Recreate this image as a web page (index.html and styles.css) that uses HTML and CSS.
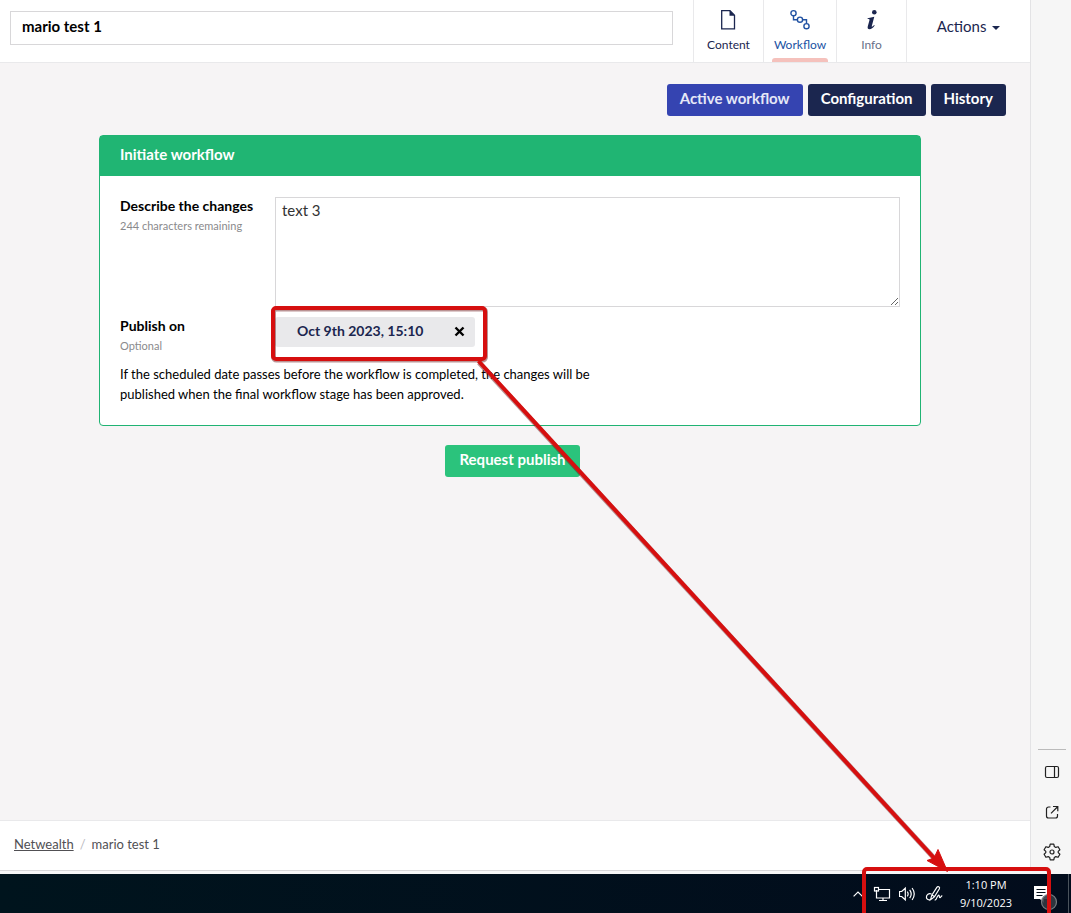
FILE: index.html
```
<!DOCTYPE html>
<html lang="en">
<head>
    <meta charset="UTF-8">
    <meta name="viewport" content="width=device-width, initial-scale=1.0">
    <title>mario test 1</title>
    <link rel="stylesheet" href="styles.css">
</head>
<body>
    <div class="browser">
        <div class="editor">
            <header class="editor-header">
                <div class="name-wrap">
                    <input class="name-input" type="text" value="mario test 1" aria-label="Name">
                </div>
                <nav class="tabs">
                    <button class="tab" type="button">
                        <svg width="20" height="22" viewBox="0 0 20 22"><path d="M2.700 1.700h8.300l4.500 4.500v13.600H2.700z" fill="none" stroke="#1b264f" stroke-width="1.300"/><path d="M10.500 1.200v5.500h5.500z" fill="#1b264f"/></svg>
                        <span>Content</span>
                    </button>
                    <button class="tab tab-active" type="button">
                        <svg width="20" height="22" viewBox="0 0 20 22" fill="none" stroke="#2152a3" stroke-width="1.4"><circle cx="3.5" cy="4.2" r="2.6"/><circle cx="10" cy="10.7" r="2.6"/><circle cx="16.5" cy="17.2" r="2.6"/><path d="M3.5 6.8v3.9h3.9M12.6 10.7h3.9v3.9"/></svg>
                        <span>Workflow</span>
                    </button>
                    <button class="tab tab-info" type="button">
                        <svg width="20" height="22" viewBox="0 0 20 22" fill="#1b264f"><circle cx="12.3" cy="3.3" r="2.3"/><path d="M5.7 9.2l6.6-1.5-2.5 9.2c-.3 1.3.5 1.1 2.3-.9l.6.5c-1.8 2.600-3.500 3.800-5.100 3.800-1.800 0-2.300-1.200-1.800-3l1.600-5.700c.4-1.500 0-1.700-1.900-1.700z"/></svg>
                        <span>Info</span>
                    </button>
                </nav>
                <button class="actions" type="button">Actions <span class="caret"></span></button>
            </header>

            <main class="content">
                <div class="toolbar">
                    <button class="btn btn-current" type="button">Active workflow</button>
                    <button class="btn" type="button">Configuration</button>
                    <button class="btn" type="button">History</button>
                </div>

                <form class="workflow">
                    <section class="box">
                        <h1 class="box-header">Initiate workflow</h1>
                        <div class="box-body">
                            <div class="row">
                                <div class="row-label">
                                    <label class="label" for="comment">Describe the changes</label>
                                    <small class="hint">244 characters remaining</small>
                                </div>
                                <textarea class="comment" id="comment">text 3</textarea>
                            </div>
                            <div class="row">
                                <div class="row-label">
                                    <label class="label" for="publish-on">Publish on</label>
                                    <small class="hint">Optional</small>
                                </div>
                                <div class="date">
                                    <button class="date-value" id="publish-on" type="button">Oct 9th 2023, 15:10</button>
                                    <button class="date-clear" type="button" aria-label="Clear date">
                                        <svg width="11" height="11" viewBox="0 0 11 11"><path d="M1.500 1.500l8 8M9.500 1.500l-8 8" stroke="#000" stroke-width="2.400"/></svg>
                                    </button>
                                </div>
                            </div>
                            <p class="note">If the scheduled date passes before the workflow is completed, the changes will be published when the final workflow stage has been approved.</p>
                        </div>
                    </section>
                    <div class="form-actions">
                        <button class="btn btn-publish" type="button">Request publish</button>
                    </div>
                </form>
            </main>

            <footer class="editor-footer">
                <a class="crumb" href="#">Netwealth</a>
                <span class="slash">/</span>
                <span>mario test 1</span>
            </footer>
        </div>

        <aside class="rail">
            <button class="rail-btn" type="button" aria-label="Split screen">
                <svg width="16" height="16" viewBox="0 0 16 16"><rect x="1.500" y="2.500" width="13" height="11" rx="1.500"/><path d="M10.500 2.500v11"/></svg>
            </button>
            <button class="rail-btn" type="button" aria-label="Open in new tab">
                <svg width="16" height="16" viewBox="0 0 16 16"><path d="M6.500 3H4.500a2 2 0 0 0-2 2v7a2 2 0 0 0 2 2h7a2 2 0 0 0 2-2v-2M9 2.500h4.800v4.800M13.800 2.500L7 9.300"/></svg>
            </button>
            <button class="rail-btn" type="button" aria-label="Settings">
                <svg width="18" height="18" viewBox="0 0 18 18"><path d="M7.200 1.200h3.600l.5 2.300 1.500.9 2.300-.7 1.800 3.100-1.700 1.600v1.200l1.700 1.600-1.800 3.100-2.300-.7-1.500.9-.5 2.300H7.200l-.5-2.300-1.500-.9-2.300.7-1.800-3.100 1.700-1.600V8.400L1.100 6.800l1.800-3.100 2.300.7 1.500-.9z" stroke-linejoin="round"/><circle cx="9" cy="9" r="2"/></svg>
            </button>
        </aside>
    </div>

    <div class="taskbar">
        <svg class="tray-up" width="12" height="6" viewBox="0 0 12 6"><path d="M.6 5.400L5 1l4.400 4.400"/></svg>
        <svg width="18" height="16" viewBox="0 0 18 16"><path d="M5.500 3.500h11v8.500h-13V6.500M10 12v2.500M6 14.500h8M3.500 4v3"/><rect x="1.500" y="1.500" width="4" height="3.500"/></svg>
        <svg width="18" height="16" viewBox="0 0 18 16"><path d="M.5 5.500h2.200l3.600-3.300v11.600l-3.600-3.300H.5zM8.300 5.600q1.700 2.400 0 4.800M10.700 3.800q3 4.200 0 8.400M13.100 2q4.300 6 0 12"/></svg>
        <svg width="18" height="18" viewBox="0 0 18 18"><path d="M6.500 9C3.800 7.900 1.400 9.500 1.400 12.200c0 2.300 2.500 3.200 4.600 2.300M5.500 14.800l1.300-4.600 5.200-8.100c.9-1.200 3.200 0 2.400 1.600l-5 8.200zM7 10l2.500 1.800M9.700 15.200c2.500.1 1.800-4.300 3.800-5 1.300-.3.300 2.600 1.600 2.400 1-.2.8-2 2.200-1.800"/></svg>
        <div class="clock">
            <span>1:10 PM</span>
            <span>9/10/2023</span>
        </div>
        <svg class="notify" width="26" height="27" viewBox="0 0 26 27"><path d="M0 0h14v13H10v4l-4-4H0z" fill="#fff" stroke="none"/><path d="M2.500 3.500h9M2.500 6.500h9M2.500 9.500h6" stroke="#020c18"/><circle cx="15" cy="16" r="7.500" fill="#333a42" fill-opacity=".9" stroke="#777c80"/></svg>
        <div class="show-desktop"></div>
    </div>

    <svg class="markup" width="1071" height="913" viewBox="0 0 1071 913">
        <g fill="none" stroke="#651012" stroke-opacity=".45" stroke-width="5">
            <rect x="273.500" y="309" width="212" height="51" rx="3"/>
            <path d="M479 362.500L934 858"/>
        </g>
        <g fill="none" stroke="#d60f0f" stroke-width="4">
            <rect x="273" y="308" width="212" height="51" rx="3"/>
            <rect x="864" y="869" width="185" height="60" rx="3"/>
            <path d="M478.500 361L935 859"/>
        </g>
        <path d="M947.500 871.500L927 860.500L934 858L938 849.500Z" fill="#d60f0f" stroke="#d60f0f"/>
    </svg>
</body>
</html>
```
FILE: styles.css
```
* {
    box-sizing: border-box;
}

body {
    display: flex;
    flex-direction: column;
    min-height: 100vh;
    margin: 0;
    background: #f6f6f6;
    font-family: Lato, "Open Sans", sans-serif;
    font-size: 15px;
    line-height: 20px;
    color: #000;
}

button, input, textarea {
    font: inherit;
    color: inherit;
    margin: 0;
}

button {
    border: none;
    background: none;
    padding: 0;
    cursor: pointer;
}

.browser {
    flex: 1;
    display: flex;
    padding-bottom: 3px;
}

/* editor */
.editor {
    flex: 1;
    display: flex;
    flex-direction: column;
    background: #f6f4f5;
    border-right: 1px solid #e3e3e5;
    border-bottom: 1px solid #d8d7d9;
}

.editor-header {
    display: flex;
    height: 63px;
    background: #fff;
    border-bottom: 1px solid #e9e9eb;
}

.name-wrap {
    flex: 1;
    padding: 11px 20px 0 10px;
}

.name-input {
    width: 100%;
    height: 34px;
    padding: 0 11px 4px;
    border: 1px solid #d8d7d9;
    font-weight: bold;
}

.tabs {
    display: flex;
}

.tab {
    display: flex;
    flex-direction: column;
    align-items: center;
    gap: 4px;
    width: 70px;
    padding-top: 9px;
    border-left: 1px solid #e9e9eb;
    font-size: 12px;
    color: #1b264f;
}

.tab-active {
    position: relative;
    width: 73px;
    color: #2152a3;
}

.tab-active::after {
    content: "";
    position: absolute;
    left: 8px;
    right: 8px;
    bottom: 0;
    height: 4px;
    background: #f5c1bc;
    border-radius: 3px 3px 0 0;
}

.tab-info {
    color: #68708a;
}

.actions {
    width: 124px;
    padding-bottom: 10px;
    border-left: 1px solid #e9e9eb;
    color: #1b264f;
}

.caret {
    display: inline-block;
    margin-left: 2px;
    vertical-align: 2px;
    border: 4px solid transparent;
    border-top-color: #1b264f;
    border-bottom: 0;
}

.content {
    flex: 1;
    padding: 21px 24px;
}

.toolbar {
    display: flex;
    justify-content: flex-end;
    gap: 5px;
}

.btn {
    height: 32px;
    padding: 0 13px 4px;
    border-radius: 3px;
    background: #1b264f;
    color: #fff;
    font-weight: bold;
}

.btn-current {
    background: #3544b1;
    color: #e6e8f7;
}

.workflow {
    padding: 19px 85px 0 75px;
}

.box {
    border: 1px solid #20b373;
    border-radius: 4px;
    background: #fff;
}

.box-header {
    margin: 0;
    padding: 8px 20px 12px;
    background: #20b573;
    color: #fff;
    font-size: 15px;
    line-height: 20px;
}

.box-body {
    padding: 21px 20px;
}

.row {
    display: flex;
}

.row + .row {
    margin-top: 9px;
}

.row-label {
    display: flex;
    flex-direction: column;
    width: 155px;
}

.row:first-child .row-label {
    margin-top: -1px;
}

.label {
    font-size: 14px;
    font-weight: bold;
}

.hint {
    font-size: 11px;
    color: #8a8a8c;
}

.comment {
    flex: 1;
    height: 110px;
    padding: 2px 6px;
    border: 1px solid #d8d7d9;
    color: #333;
}

.date {
    display: flex;
    height: 30px;
    margin-top: 1px;
    background: #e9e9eb;
    border-radius: 3px;
}

.date-value {
    padding: 0 22px 2px;
    color: #1b264f;
    font-size: 14px;
    font-weight: bold;
}

.date-clear {
    display: flex;
    align-items: center;
    padding: 0 10px 1px 9px;
}

.note {
    max-width: 480px;
    margin: 8px 0 0;
    font-size: 13px;
}

.form-actions {
    display: flex;
    justify-content: center;
    padding: 19px 0 0 5px;
}

.btn-publish {
    padding: 0 14px 4px;
    background: #2bc37c;
}

.editor-footer {
    display: flex;
    gap: 6px;
    padding: 13px 14px 16px;
    border-top: 1px solid #e9e9eb;
    background: #fff;
    font-size: 13px;
    color: #515054;
}

.crumb {
    color: inherit;
}

.slash {
    color: #bbbabf;
}

/* browser side rail */
.rail {
    display: flex;
    flex-direction: column;
    align-items: center;
    justify-content: flex-end;
    width: 40px;
    padding-left: 2px;
}

.rail-btn {
    display: flex;
    align-items: center;
    justify-content: center;
    width: 28px;
    height: 40px;
    padding-top: 2px;
    fill: none;
    stroke: #222;
    stroke-width: 1.2;
}

.rail-btn:first-child {
    height: 42px;
    border-top: 1px solid #bbb;
}

/* windows taskbar */
.taskbar {
    display: flex;
    align-items: center;
    justify-content: flex-end;
    gap: 8px;
    height: 39px;
    background: linear-gradient(to right, #00141d, #020c1c);
    color: #fff;
    font-family: "Open Sans", "Noto Sans", sans-serif;
    font-size: 11px;
    line-height: 18px;
    fill: none;
    stroke: #fff;
    stroke-width: 1.2;
}

.clock {
    display: flex;
    flex-direction: column;
    align-items: center;
    width: 70px;
    margin-right: 5px;
    stroke: none;
}

.notify {
    align-self: flex-end;
}

.show-desktop {
    width: 3px;
    height: 100%;
    border-left: 1px solid #4a535c;
}

/* red box and arrow drawn over the page */
.markup {
    position: absolute;
    top: 0;
    left: 0;
    pointer-events: none;
}
```
